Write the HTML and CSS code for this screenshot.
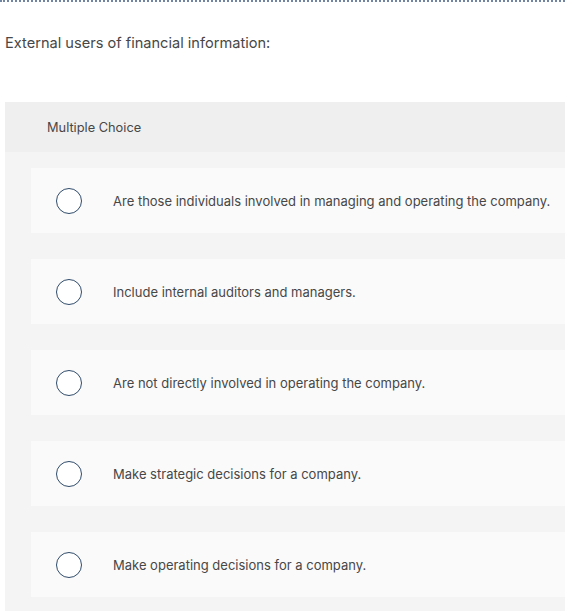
FILE: index.html
```html
<!DOCTYPE html>
<html>
<head>
<meta charset="utf-8">
<link rel="stylesheet" href="styles.css">
</head>
<body>
<div class="topline"></div>
<p class="question">External users of financial information:</p>
<div class="panel">
  <div class="panel-head">Multiple Choice</div>
  <div class="options">
    <div class="option"><span class="radio"></span><span class="label">Are those individuals involved in managing and operating the company.</span></div>
    <div class="option"><span class="radio"></span><span class="label">Include internal auditors and managers.</span></div>
    <div class="option"><span class="radio"></span><span class="label">Are not directly involved in operating the company.</span></div>
    <div class="option"><span class="radio"></span><span class="label">Make strategic decisions for a company.</span></div>
    <div class="option"><span class="radio"></span><span class="label">Make operating decisions for a company.</span></div>
  </div>
</div>
</body>
</html>
```
FILE: styles.css
```css
html, body { margin: 0; padding: 0; background: #fff; }
body {
  font-family: "Inter", "Lato", sans-serif;
  color: #474747;
  overflow: hidden;
}
.topline {
  height: 0;
  border-top: 2px dotted #6f86a3;
}
.question {
  margin: 31px 0 0 5px;
  font-size: 14.6px;
  line-height: 20px;
  height: 20px;
}
.panel {
  margin: 49px 0 0 5px;
  background: #f4f4f4;
}
.panel-head {
  background: #efefef;
  height: 50px;
  line-height: 52px;
  padding-left: 42px;
  font-size: 12.8px;
}
.options {
  display: flex;
  flex-direction: column;
  gap: 26px;
  padding: 16px 0 20px 26px;
}
.option {
  background: #fafafa;
  height: 65px;
  display: flex;
  align-items: center;
  padding-left: 25px;
}
.radio {
  width: 24px;
  height: 24px;
  border: 1.5px solid #2f4b6b;
  border-radius: 50%;
  background: #fff;
  flex: none;
  margin-top: 1px;
}
.label {
  margin-left: 31px;
  margin-top: 1px;
  font-size: 13px;
}
```
